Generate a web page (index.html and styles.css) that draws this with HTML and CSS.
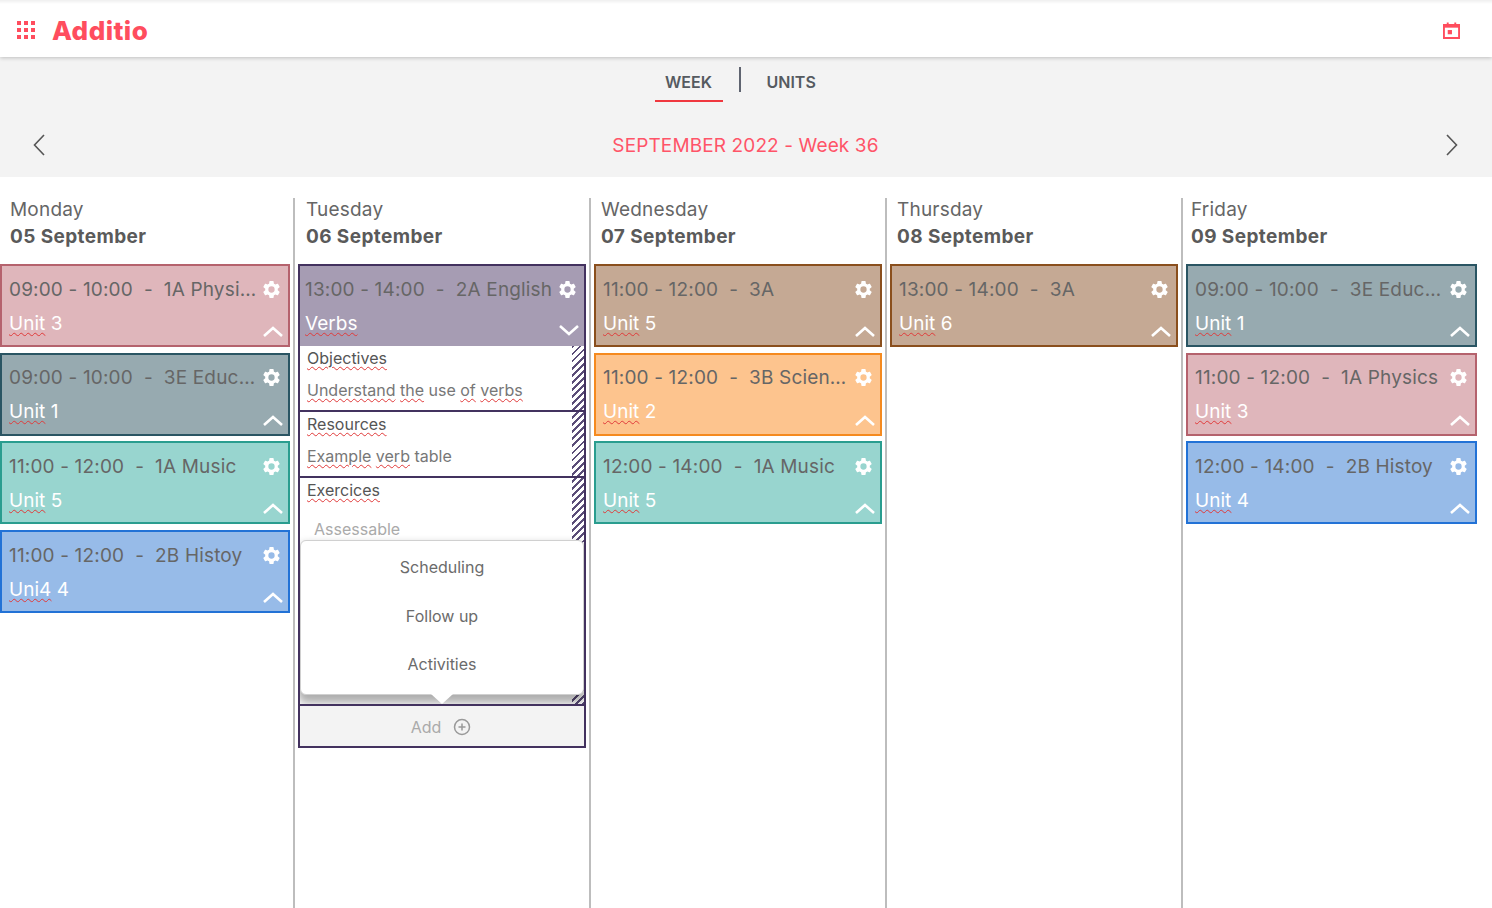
FILE: index.html
```html
<!DOCTYPE html>
<html lang="en">
<head>
<meta charset="utf-8">
<title>Additio</title>
<link rel="stylesheet" href="styles.css">
</head>
<body>
<svg class="defs" width="0" height="0" aria-hidden="true">
  <symbol id="gear" viewBox="0 0 24 24"><path d="M19.14 12.94c.04-.3.06-.61.06-.94s-.02-.64-.07-.94l2.03-1.58a.49.49 0 0 0 .12-.61l-1.92-3.32a.49.49 0 0 0-.59-.22l-2.39.96a7 7 0 0 0-1.62-.94l-.36-2.54a.48.48 0 0 0-.48-.41h-3.84a.48.48 0 0 0-.47.41l-.36 2.54c-.59.24-1.13.57-1.62.94l-2.39-.96a.48.48 0 0 0-.59.22L2.74 8.87a.48.48 0 0 0 .12.61l2.03 1.58c-.05.3-.09.63-.09.94s.02.64.07.94l-2.03 1.58a.49.49 0 0 0-.12.61l1.92 3.32c.12.22.37.29.59.22l2.39-.96c.5.38 1.03.7 1.62.94l.36 2.54c.05.24.24.41.48.41h3.84c.24 0 .44-.17.47-.41l.36-2.54c.59-.24 1.13-.56 1.62-.94l2.39.96c.22.08.47 0 .59-.22l1.92-3.32a.48.48 0 0 0-.12-.61l-2.01-1.58zM12 15.6A3.6 3.6 0 1 1 12 8.4a3.6 3.6 0 0 1 0 7.2z"/></symbol>
  <symbol id="up" viewBox="0 0 20 12"><path d="M1 11 10 3l9 8" fill="none" stroke="currentColor" stroke-width="2.6"/></symbol>
  <symbol id="down" viewBox="0 0 20 12"><path d="M1 1l9 8 9-8" fill="none" stroke="currentColor" stroke-width="2.6"/></symbol>
</svg>

<header class="topbar">
  <div class="brand">
    <svg class="apps" viewBox="0 0 18 18"><g><rect x="0" y="0" width="4" height="4"/><rect x="7" y="0" width="4" height="4"/><rect x="14" y="0" width="4" height="4"/><rect x="0" y="7" width="4" height="4"/><rect x="7" y="7" width="4" height="4"/><rect x="14" y="7" width="4" height="4"/><rect x="0" y="14" width="4" height="4"/><rect x="7" y="14" width="4" height="4"/><rect x="14" y="14" width="4" height="4"/></g></svg>
    <span class="logo">Additio</span>
  </div>
  <svg class="calendar" viewBox="0 0 18 18"><path d="M1 3h16v14H1z" fill="none" stroke="currentColor" stroke-width="2"/><path d="M1 2.500h16V6H1z" fill="currentColor"/><path d="M4 .5h2v3H4zM12 .5h2v3h-2z" fill="currentColor"/><path d="M5 8.500h4.500V13H5z" fill="currentColor"/></svg>
</header>

<section class="subbar">
  <nav class="tabs">
    <a class="tab tab-active">WEEK</a>
    <span class="tab-sep"></span>
    <a class="tab">UNITS</a>
  </nav>
  <div class="weeknav">
    <svg class="arrow" viewBox="0 0 12 24"><path d="M11 2 1.500 12 11 22" fill="none" stroke="currentColor" stroke-width="1.600"/></svg>
    <span class="weektitle">SEPTEMBER 2022 - Week 36</span>
    <svg class="arrow" viewBox="0 0 12 24"><path d="M1 2l9.500 10L1 22" fill="none" stroke="currentColor" stroke-width="1.600"/></svg>
  </div>
</section>

<main class="week">
  <section class="day day-1">
    <div class="day-head"><div class="day-name">Monday</div><div class="day-date">05 September</div></div>
    <article class="card pink"><div class="row"><span class="title">09:00 - 10:00 &nbsp;-&nbsp; 1A Physics</span><svg class="gear"><use href="#gear"/></svg></div><div class="row"><span class="unit"><u>Unit</u> 3</span><svg class="chev"><use href="#up"/></svg></div></article>
    <article class="card slate"><div class="row"><span class="title">09:00 - 10:00 &nbsp;-&nbsp; 3E Education</span><svg class="gear"><use href="#gear"/></svg></div><div class="row"><span class="unit"><u>Unit</u> 1</span><svg class="chev"><use href="#up"/></svg></div></article>
    <article class="card mint"><div class="row"><span class="title">11:00 - 12:00 &nbsp;-&nbsp; 1A Music</span><svg class="gear"><use href="#gear"/></svg></div><div class="row"><span class="unit"><u>Unit</u> 5</span><svg class="chev"><use href="#up"/></svg></div></article>
    <article class="card blue"><div class="row"><span class="title">11:00 - 12:00 &nbsp;-&nbsp; 2B Histoy</span><svg class="gear"><use href="#gear"/></svg></div><div class="row"><span class="unit"><u>Uni4</u> 4</span><svg class="chev"><use href="#up"/></svg></div></article>
  </section>

  <section class="day day-2">
    <div class="day-head"><div class="day-name">Tuesday</div><div class="day-date">06 September</div></div>
    <article class="expanded">
      <div class="card purple card-open"><div class="row"><span class="title">13:00 - 14:00 &nbsp;-&nbsp; 2A English</span><svg class="gear"><use href="#gear"/></svg></div><div class="row"><span class="unit"><u>Verbs</u></span><svg class="chev"><use href="#down"/></svg></div></div>
      <div class="details">
        <div class="detail"><div class="detail-title"><u>Objectives</u></div><div class="detail-text"><u>Understand</u> <u>the</u> use <u>of</u> <u>verbs</u></div></div>
        <div class="detail"><div class="detail-title"><u>Resources</u></div><div class="detail-text"><u>Example</u> <u>verb</u> table</div></div>
        <div class="detail detail-last"><div class="detail-title"><u>Exercices</u></div><div class="assess">Assessable</div></div>
        <div class="popover">
          <div class="pop-item">Scheduling</div>
          <div class="pop-item">Follow up</div>
          <div class="pop-item">Activities</div>
        </div>
      </div>
      <div class="add">Add
        <svg class="plus" viewBox="0 0 18 18"><circle cx="9" cy="9" r="7.500" fill="none" stroke="currentColor" stroke-width="1.500"/><path d="M9 5.500v7M5.500 9h7" stroke="currentColor" stroke-width="1.500"/></svg>
      </div>
    </article>
  </section>

  <section class="day">
    <div class="day-head"><div class="day-name">Wednesday</div><div class="day-date">07 September</div></div>
    <article class="card brown"><div class="row"><span class="title">11:00 - 12:00 &nbsp;-&nbsp; 3A</span><svg class="gear"><use href="#gear"/></svg></div><div class="row"><span class="unit"><u>Unit</u> 5</span><svg class="chev"><use href="#up"/></svg></div></article>
    <article class="card orange"><div class="row"><span class="title">11:00 - 12:00 &nbsp;-&nbsp; 3B Science</span><svg class="gear"><use href="#gear"/></svg></div><div class="row"><span class="unit"><u>Unit</u> 2</span><svg class="chev"><use href="#up"/></svg></div></article>
    <article class="card mint"><div class="row"><span class="title">12:00 - 14:00 &nbsp;-&nbsp; 1A Music</span><svg class="gear"><use href="#gear"/></svg></div><div class="row"><span class="unit"><u>Unit</u> 5</span><svg class="chev"><use href="#up"/></svg></div></article>
  </section>

  <section class="day">
    <div class="day-head"><div class="day-name">Thursday</div><div class="day-date">08 September</div></div>
    <article class="card brown"><div class="row"><span class="title">13:00 - 14:00 &nbsp;-&nbsp; 3A</span><svg class="gear"><use href="#gear"/></svg></div><div class="row"><span class="unit"><u>Unit</u> 6</span><svg class="chev"><use href="#up"/></svg></div></article>
  </section>

  <section class="day day-5">
    <div class="day-head"><div class="day-name">Friday</div><div class="day-date">09 September</div></div>
    <article class="card slate"><div class="row"><span class="title">09:00 - 10:00 &nbsp;-&nbsp; 3E Education</span><svg class="gear"><use href="#gear"/></svg></div><div class="row"><span class="unit"><u>Unit</u> 1</span><svg class="chev"><use href="#up"/></svg></div></article>
    <article class="card pink"><div class="row"><span class="title">11:00 - 12:00 &nbsp;-&nbsp; 1A Physics</span><svg class="gear"><use href="#gear"/></svg></div><div class="row"><span class="unit"><u>Unit</u> 3</span><svg class="chev"><use href="#up"/></svg></div></article>
    <article class="card blue"><div class="row"><span class="title">12:00 - 14:00 &nbsp;-&nbsp; 2B Histoy</span><svg class="gear"><use href="#gear"/></svg></div><div class="row"><span class="unit"><u>Unit</u> 4</span><svg class="chev"><use href="#up"/></svg></div></article>
  </section>
</main>
</body>
</html>
```
FILE: styles.css
```css
* { box-sizing: border-box; }
html, body { height: 100%; }
body {
  margin: 0;
  width: 1492px;
  height: 908px;
  overflow: hidden;
  background: #fff;
  color: #5f5f5f;
  font-family: Inter, "Liberation Sans", sans-serif;
  display: flex;
  flex-direction: column;
}
.defs { position: absolute; }

.topbar {
  height: 57px;
  flex: none;
  background: linear-gradient(#efefef 0, #fff 4px);
  box-shadow: 0 1px 4px rgba(0, 0, 0, .22);
  display: flex;
  align-items: center;
  justify-content: space-between;
  padding: 3px 32px 0 17px;
  position: relative;
  z-index: 2;
}
.brand { display: flex; align-items: center; gap: 17px; }
.apps { width: 18px; height: 18px; fill: #ff4d5e; }
.logo { font-size: 26px; font-weight: 800; color: #ff4d5e; letter-spacing: .45px; }
.calendar { width: 17px; height: 17px; color: #ff4d5e; }

.subbar { height: 120px; flex: none; background: #f3f3f3; padding-top: 10px; }
.tabs { display: flex; justify-content: center; align-items: flex-start; height: 35px; padding-right: 13px; }
.tab {
  font-size: 16px;
  font-weight: 600;
  color: #555a60;
  height: 35px;
  padding: 5px 10px 0;
  width: 68px;
  text-align: center;
  white-space: nowrap;
}
.tab-active { border-bottom: 2px solid #f0383f; }
.tab-sep { width: 2px; height: 25px; background: #5f6470; margin: 0 16px; }
.weeknav {
  display: flex;
  align-items: center;
  justify-content: space-between;
  padding: 0 34px 0 33px;
  margin-top: 19px;
  height: 48px;
}
.arrow { width: 12px; height: 24px; color: #555; }
.weektitle { font-size: 19px; color: #ff5468; letter-spacing: .12px; }

.week { flex: 1; display: grid; grid-template-columns: 295px 296px 296px 296px 309px; padding-top: 21px; }
.day { border-right: 2px solid #bdbdbd; padding: 0 3px; min-width: 0; }
.day-1 { padding-left: 0; }
.day-5 { border-right: 0; padding-right: 15px; }
.day-head { height: 66px; padding-left: 7px; }
.day-1 .day-head { padding-left: 10px; }
.day-2 .day-head { padding-left: 8px; }
.day-5 .day-head { padding-left: 5px; }
.day-name { font-size: 19px; line-height: 24px; color: #666; letter-spacing: .2px; }
.day-date { font-size: 19px; line-height: 30px; font-weight: 700; color: #5a5a5a; letter-spacing: .4px; }

.card {
  height: 83px;
  border: 2px solid;
  margin-bottom: 5.700px;
  padding: 11px 8px 0 7px;
}
.row { display: flex; align-items: center; justify-content: space-between; height: 24px; }
.row + .row { margin-top: 10px; }
.title {
  font-size: 19px;
  color: #666;
  white-space: nowrap;
  overflow: hidden;
  text-overflow: ellipsis;
  min-width: 0;
  flex: 1;
  letter-spacing: .16px;
}
.gear { width: 21px; height: 21px; fill: #fff; flex: none; margin: 0 -2px 0 2px; }
.unit { font-size: 19px; color: #fff; letter-spacing: .05px; }
u { text-decoration: underline wavy #e03a3a 1px; text-underline-offset: 2px; }
.chev { width: 20px; height: 12px; color: #fff; flex: none; margin: 16px -3px 0 0; }

.pink { background: #dfb6bb; border-color: #b5626d; }
.slate { background: #97aab0; border-color: #2a5563; }
.mint { background: #98d5cf; border-color: #2a9d8f; }
.blue { background: #97bbe8; border-color: #2272d6; }
.purple { background: #a69cb3; border-color: #43325f; }
.brown { background: #c5a994; border-color: #8a4f1d; }
.orange { background: #fdc48e; border-color: #f58a1f; }

.expanded { border: 2px solid #43325f; height: 484px; display: flex; flex-direction: column; }
.card-open { border: 0; height: 80px; margin: 0; flex: none; padding: 11px 8px 0 5px; }
.details { flex: 1; position: relative; overflow: hidden; background:
  repeating-linear-gradient(135deg, #5b4d78 0 2px, #fff 2px 5px) right top / 12px 100% no-repeat, #fff;
  border-bottom: 2px solid #43325f;
}
.detail { height: 66px; border-bottom: 2px solid #43325f; padding: 2px 14px 0 7px; }
.detail-last { border-bottom: 0; }
.detail-title, .detail-text { font-size: 16px; line-height: 20px; color: #555; white-space: nowrap; }
.detail-text { margin-top: 12px; color: #777; }
.assess { font-size: 16px; color: #aaa; margin: 19px 0 0 7px; }
.popover {
  position: absolute;
  left: 0;
  right: 0;
  top: 194px;
  height: 155px;
  background: #fff;
  border: 1px solid #d0d0d0;
  border-radius: 6px;
  box-shadow: 0 6px 8px 2px rgba(0, 0, 0, .32);
  padding-top: 2px;
}
.popover::after {
  content: "";
  position: absolute;
  left: 50%;
  bottom: -10px;
  width: 0;
  height: 0;
  margin-left: -11px;
  border: 11px solid transparent;
  border-bottom: 0;
  border-top: 10px solid #fff;
}
.pop-item { height: 48.500px; display: flex; align-items: center; justify-content: center; font-size: 16px; color: #6b6b6b; }
.add {
  height: 40px;
  flex: none;
  background: #f3f3f3;
  display: flex;
  align-items: center;
  justify-content: center;
  gap: 12px;
  font-size: 16px;
  color: #aaa;
  padding: 1px 2px 0 0;
}
.plus { width: 18px; height: 18px; color: #999; }
```
